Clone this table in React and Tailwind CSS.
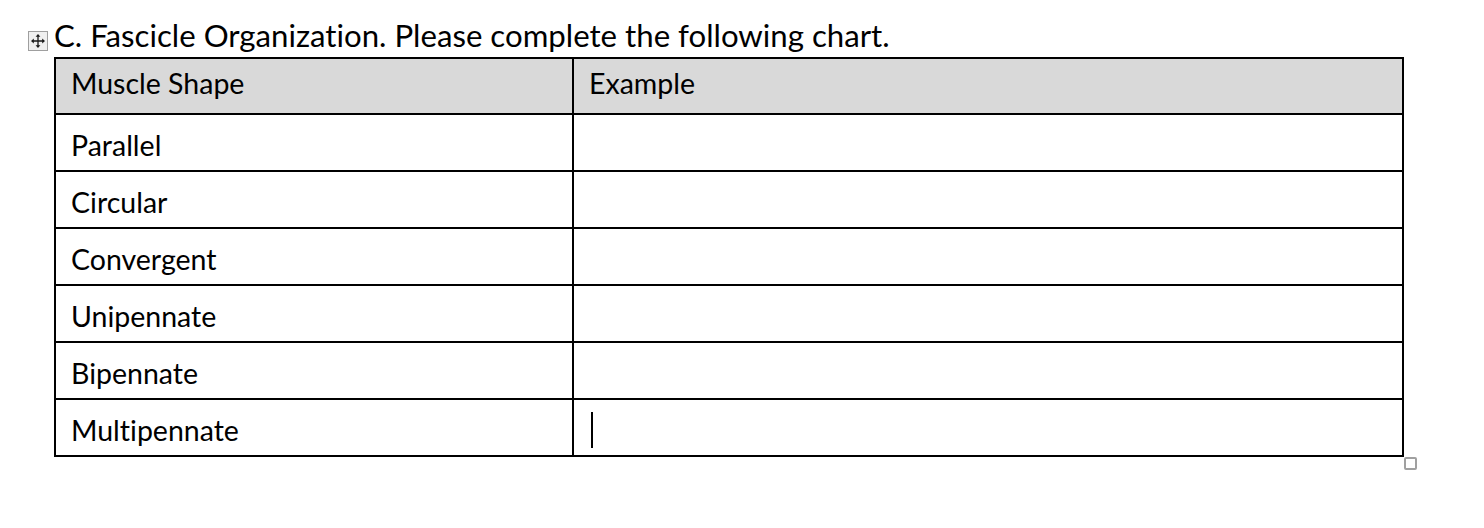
import React from 'react'

const rows = ['Parallel', 'Circular', 'Convergent', 'Unipennate', 'Bipennate', 'Multipennate']

function MoveHandle() {
  return (
    <div className="w-[20px] h-[20px] border border-[#9f9f9f] bg-[#f0f0f0] flex items-center justify-center">
      <svg width="16" height="16" viewBox="0 0 16 16">
        <path d="M3 8H13M8 3V13" stroke="#1a1a1a" strokeWidth="1.3" />
        <path d="M8 1L5.6 3.8H10.4Z M8 15L5.6 12.2H10.4Z M1 8L3.8 5.6V10.4Z M15 8L12.2 5.6V10.4Z" fill="#1a1a1a" />
      </svg>
    </div>
  )
}

export default function App() {
  return (
    <div
      className="w-[1484px] h-[528px] bg-white text-black [font-variant-ligatures:none]"
      style={{ fontFamily: 'Lato, "Open Sans", sans-serif' }}
    >
      <div className="flex items-start pl-[28px] pt-[17px] h-[57px]">
        <div className="mt-[14px]">
          <MoveHandle />
        </div>
        <h1 className="ml-[6px] text-[31.2px] leading-[36px] font-normal">
          C. Fascicle Organization. Please complete the following chart.
        </h1>
      </div>

      <div className="relative ml-[54px] w-[1350px]">
        <div className="grid grid-cols-[518px_830px] border-l-2 border-t-2 border-black text-[28.5px] leading-[34px]">
          <div className="h-[56px] bg-[#d9d9d9] border-r-2 border-b-2 border-black pl-[15px] pt-[7px]">Muscle Shape</div>
          <div className="h-[56px] bg-[#d9d9d9] border-r-2 border-b-2 border-black pl-[15px] pt-[7px]">Example</div>
          {rows.map((r, i) => (
            <React.Fragment key={r}>
              <div className="h-[57px] border-r-2 border-b-2 border-black pl-[15px] pt-[13px]">{r}</div>
              <div className="h-[57px] border-r-2 border-b-2 border-black pl-[17px] pt-[12px]">
                {i === rows.length - 1 && <span className="block w-[1.5px] h-[36px] bg-black" />}
              </div>
            </React.Fragment>
          ))}
        </div>
        <div className="absolute -right-[13px] -bottom-[13px] w-[13px] h-[13px] border-2 border-[#a0a0a0] rounded-[2px] bg-white" />
      </div>
    </div>
  )
}
